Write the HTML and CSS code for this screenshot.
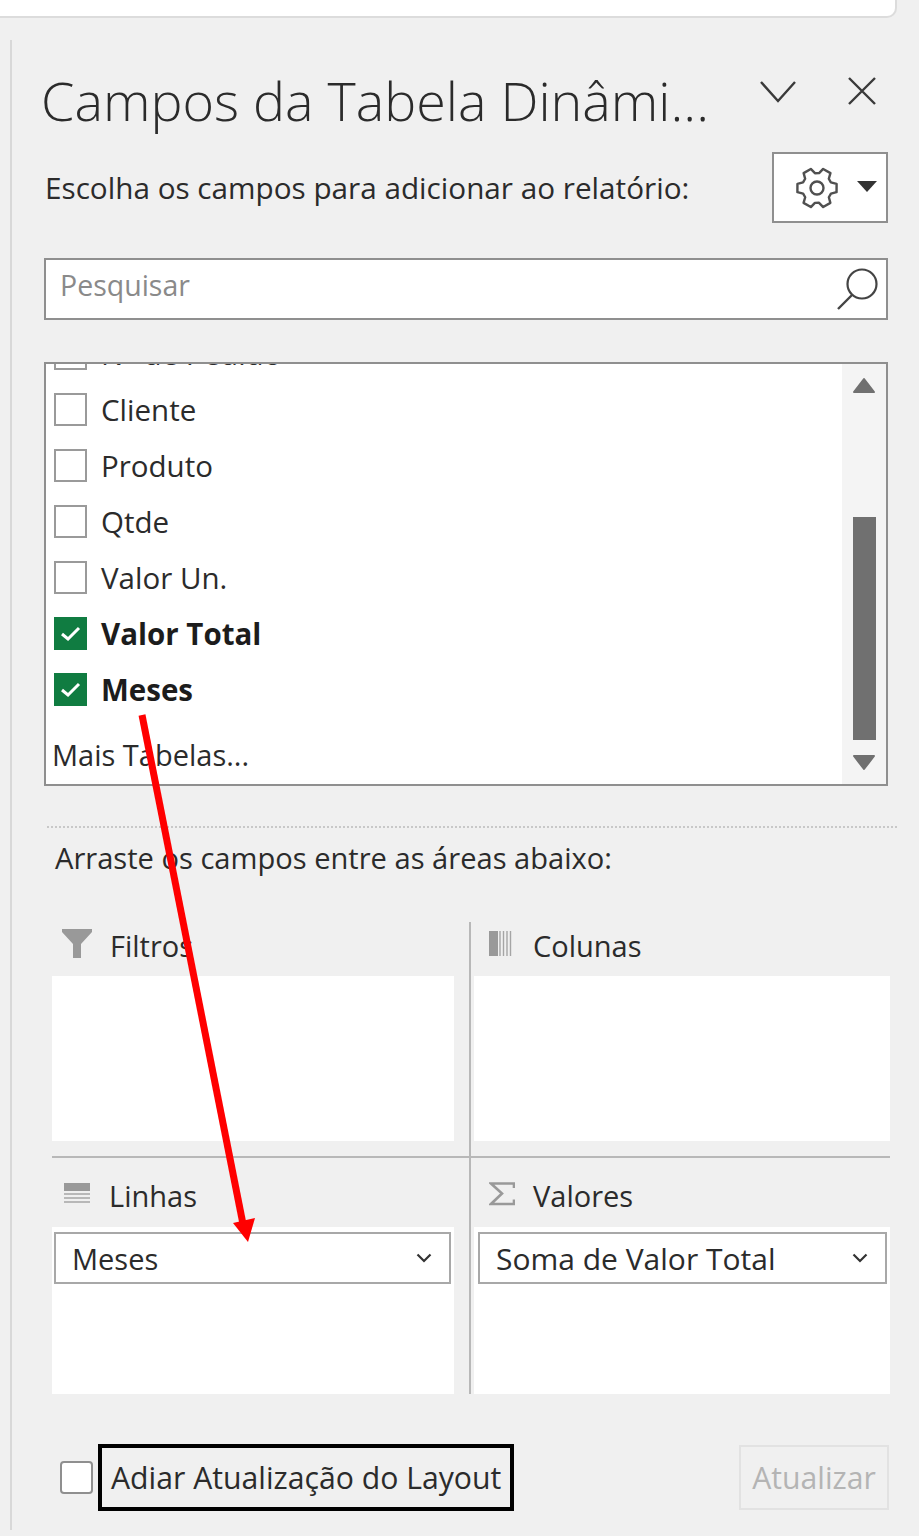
FILE: index.html

```html
<!DOCTYPE html>
<html lang="pt-BR">

<head>
  <meta charset="UTF-8" />
  <meta name="viewport" content="width=device-width, initial-scale=1" />
  <title>Campos da Tabela Dinâmica</title>
  <link rel="stylesheet" href="styles.css">
</head>

<body>
  <div class="top-strip"></div>

  <div class="pane">
    <div class="title-row">
      <h1 class="title">Campos da Tabela Dinâmi...</h1>
      <svg class="title-chevron" width="36" height="22" viewBox="0 0 36 22">
        <path d="M1 1 L18 20 L35 1" fill="none" stroke="#3a3a3a" stroke-width="2.4" />
      </svg>
      <svg class="title-close" width="28" height="28" viewBox="0 0 28 28">
        <path d="M1 1 L27 27 M27 1 L1 27" fill="none" stroke="#3a3a3a" stroke-width="2.4" />
      </svg>
    </div>

    <div class="choose-row">
      <span class="choose-label">Escolha os campos para adicionar ao relatório:</span>
      <button class="gear-btn">
        <svg width="44" height="44" viewBox="-2 -1 44 44">
          <path transform="rotate(30 20 21)" d="M15.8 1.4 L24.2 1.4 L25.6 7.1 L29.2 9.2 L34.9 7.6 L39 14.8 L34.9 18.9 L34.9 23.1 L39 27.2 L34.9 34.4 L29.2 32.8 L25.6 34.9 L24.2 40.6 L15.8 40.6 L14.4 34.9 L10.8 32.8 L5.1 34.4 L1 27.2 L5.1 23.1 L5.1 18.9 L1 14.8 L5.1 7.6 L10.8 9.2 L14.4 7.1 Z" fill="none" stroke="#505050" stroke-width="2.4" stroke-linejoin="round" />
          <circle cx="20" cy="21" r="6.5" fill="none" stroke="#505050" stroke-width="2.4" />
        </svg>
        <span class="gear-caret"></span>
      </button>
    </div>

    <div class="search">
      <span class="search-text">Pesquisar</span>
      <svg width="42" height="44" viewBox="0 0 42 44">
        <circle cx="25" cy="17" r="14.5" fill="none" stroke="#444" stroke-width="2.2" />
        <path d="M15 28 L1 42" fill="none" stroke="#444" stroke-width="2.4" />
      </svg>
    </div>

    <div class="field-list">
      <div class="field-items">
        <div class="field clipped"><span class="check"></span>N° de Pedido</div>
        <div class="field"><span class="check"></span>Cliente</div>
        <div class="field"><span class="check"></span>Produto</div>
        <div class="field"><span class="check"></span>Qtde</div>
        <div class="field"><span class="check"></span>Valor Un.</div>
        <div class="field selected">
          <span class="check on">
            <svg width="21" height="15" viewBox="0 0 21 15"><path d="M2 8 L8 13 L19 2" fill="none" stroke="#fff" stroke-width="3" /></svg>
          </span>Valor Total
        </div>
        <div class="field selected">
          <span class="check on">
            <svg width="21" height="15" viewBox="0 0 21 15"><path d="M2 8 L8 13 L19 2" fill="none" stroke="#fff" stroke-width="3" /></svg>
          </span>Meses
        </div>
        <div class="more-tables">Mais Tabelas...</div>
      </div>
      <div class="scrollbar">
        <svg class="scroll-up" width="24" height="18" viewBox="0 0 24 18"><path d="M12 2 L22 15 L2 15 Z" fill="#707070" stroke="#707070" stroke-width="2" stroke-linejoin="round" /></svg>
        <div class="scroll-thumb"></div>
        <svg class="scroll-down" width="24" height="18" viewBox="0 0 24 18"><path d="M2 3 L22 3 L12 16 Z" fill="#707070" stroke="#707070" stroke-width="2" stroke-linejoin="round" /></svg>
      </div>
    </div>

    <div class="dotted"></div>

    <div class="drag-label">Arraste os campos entre as áreas abaixo:</div>

    <div class="zones">
      <div class="zone zone-top zone-left">
        <div class="zone-head">
          <svg class="zone-icon" width="30" height="30" viewBox="0 0 30 30"><path d="M0 0 L30 0 L30 3 L19 15 L19 29 L11 29 L11 15 L0 3 Z" fill="#999" /></svg>
          <span>Filtros</span>
        </div>
        <div class="zone-box"></div>
      </div>
      <div class="zone zone-top zone-right">
        <div class="zone-head">
          <svg class="zone-icon" width="24" height="26" viewBox="0 0 24 26"><path d="M0 0 H9 V25 H0 Z" fill="#999" /><path d="M11 0 V25 M14.5 0 V25 M18 0 V25 M21.5 0 V25" stroke="#a5a5a5" stroke-width="1.4" /></svg>
          <span>Colunas</span>
        </div>
        <div class="zone-box"></div>
      </div>
      <div class="zone zone-left">
        <div class="zone-head tall">
          <svg class="zone-icon rows-icon" width="26" height="22" viewBox="0 0 26 22"><path d="M0 0 H26 V8 H0 Z" fill="#999" /><path d="M0 11 H26 M0 15 H26 M0 19 H26" stroke="#a5a5a5" stroke-width="1.6" /></svg>
          <span>Linhas</span>
        </div>
        <div class="zone-box">
          <div class="pill">
            <span>Meses</span>
            <svg width="16" height="10" viewBox="0 0 16 10"><path d="M1.5 1.5 L8 8 L14.5 1.5" fill="none" stroke="#333" stroke-width="2.2" /></svg>
          </div>
        </div>
      </div>
      <div class="zone zone-right">
        <div class="zone-head tall">
          <svg class="zone-icon sum-icon" width="26" height="24" viewBox="0 0 26 24"><path d="M25 6 V1.5 H2 L13 11.5 L2 22 H25 V17.5" fill="none" stroke="#999" stroke-width="2.6" /></svg>
          <span>Valores</span>
        </div>
        <div class="zone-box">
          <div class="pill">
            <span>Soma de Valor Total</span>
            <svg width="16" height="10" viewBox="0 0 16 10"><path d="M1.5 1.5 L8 8 L14.5 1.5" fill="none" stroke="#333" stroke-width="2.2" /></svg>
          </div>
        </div>
      </div>
    </div>

    <div class="footer">
      <span class="defer-check"></span>
      <span class="defer-label">Adiar Atualização do Layout</span>
      <button class="update-btn">Atualizar</button>
    </div>
  </div>

  <!-- seta vermelha desenhada por cima do painel -->
  <svg class="arrow" width="919" height="1536" viewBox="0 0 919 1536">
    <path d="M142 715 L243 1224" fill="none" stroke="#ff0000" stroke-width="7" />
    <polygon points="233,1223 255,1218 248,1242" fill="#ff0000" />
  </svg>
</body>

</html>
```

FILE: styles.css

```css
* {
  box-sizing: border-box;
}

body {
  margin: 0;
  width: 919px;
  height: 1536px;
  overflow: hidden;
  position: relative;
  background-color: #f0f0f0;
  font-family: "Open Sans", "Noto Sans", sans-serif;
  font-size: 29.5px;
  color: #2b2b2b;
}

.top-strip {
  width: 897px;
  height: 18px;
  background-color: #fff;
  border-bottom: 2px solid #dcdcdc;
  border-right: 2px solid #dcdcdc;
  border-bottom-right-radius: 10px;
}

.pane {
  margin: 22px 0 0 10px;
  height: 1490px;
  border-left: 2px solid #d8d8d8;
  padding: 30px 31px 0 32px;
}

.title-row {
  display: flex;
  align-items: center;
  height: 60px;
}

.title {
  margin: 0 0 0 -3px;
  font-size: 53.8px;
  font-weight: 300;
  line-height: 60px;
  white-space: nowrap;
  width: 717px;
  color: #2b2b2b;
}

.title-chevron {
  margin: -16px 0 0 2px;
}

.title-close {
  margin: -18px 0 0 52px;
}

.choose-row {
  display: flex;
  align-items: center;
  justify-content: space-between;
  margin-top: 22px;
  height: 71px;
}

.choose-label {
  margin-left: 1px;
  font-size: 29.7px;
  white-space: nowrap;
}

.gear-btn {
  display: flex;
  align-items: center;
  width: 116px;
  height: 71px;
  padding: 0 0 0 21px;
  background-color: #fff;
  border: 2px solid #8f8f8f;
}

.gear-caret {
  margin: -2px 0 0 18px;
  width: 0;
  height: 0;
  border-left: 10px solid transparent;
  border-right: 10px solid transparent;
  border-top: 11px solid #333;
}

.search {
  display: flex;
  align-items: center;
  justify-content: space-between;
  margin-top: 35px;
  height: 62px;
  padding: 0 7px 0 14px;
  background-color: #fff;
  border: 2px solid #8f8f8f;
}

.search-text {
  margin-top: -8px;
  font-size: 28.5px;
  color: #8a8a8a;
}

.field-list {
  display: flex;
  margin-top: 42px;
  height: 424px;
  background-color: #fff;
  border: 2px solid #8f8f8f;
  overflow: hidden;
}

.field-items {
  flex: 1;
  overflow: hidden;
}

.field {
  display: flex;
  align-items: center;
  height: 56px;
  padding: 0 0 2px 8px;
}

.field.clipped {
  margin-top: -38px;
}

.field.selected {
  font-weight: 700;
  color: #1c1c1c;
}

.check {
  display: flex;
  align-items: center;
  justify-content: center;
  width: 33px;
  height: 33px;
  margin-right: 14px;
  background-color: #fff;
  border: 2px solid #9a9a9a;
}

.check.on {
  background-color: #107c41;
  border-color: #107c41;
}

.more-tables {
  margin: 17px 0 0 6px;
  font-size: 29px;
  line-height: 40px;
}

.scrollbar {
  display: flex;
  flex-direction: column;
  align-items: center;
  width: 44px;
  background-color: #f4f4f4;
}

.scroll-up {
  margin-top: 13px;
  flex-shrink: 0;
}

.scroll-thumb {
  margin-top: 122px;
  width: 23px;
  height: 223px;
  background-color: #707070;
  flex-shrink: 0;
}

.scroll-down {
  margin-top: 13px;
  flex-shrink: 0;
}

.dotted {
  margin: 40px -9px 0 3px;
  border-top: 2px dotted #c8c8c8;
}

.drag-label {
  margin: 11px 0 0 11px;
  font-size: 29.1px;
  line-height: 38px;
  white-space: nowrap;
}

.zones {
  display: grid;
  grid-template-columns: 1fr 1fr;
  margin: 45px -2px 0 8px;
}

.zone-left {
  border-right: 2px solid #b8b8b8;
}

.zone-top {
  padding-bottom: 15px;
  border-bottom: 2px solid #b8b8b8;
}

.zone-head {
  display: flex;
  align-items: center;
  height: 54px;
  padding-bottom: 8px;
  font-size: 29px;
}

.zone-head.tall {
  height: 69px;
  padding-top: 6px;
  padding-bottom: 0;
}

.zone-left .zone-head {
  padding-left: 10px;
}

.zone-left .zone-head span {
  margin-left: 18px;
}

.zone-right .zone-head {
  padding-left: 18px;
}

.zone-right .zone-head span {
  margin-left: 20px;
}

.zone-icon {
  flex-shrink: 0;
  margin-top: -2px;
}

.zone-head.tall .zone-icon {
  margin-top: -4px;
}

.rows-icon {
  margin-left: 2px;
  margin-right: 1px;
}

.sum-icon {
  margin-right: -2px;
}

.zone-box {
  height: 165px;
  background-color: #fff;
}

.zone:not(.zone-top) .zone-box {
  height: 167px;
}

.zone-left .zone-box {
  margin-right: 15px;
  padding: 5px 3px 0 2px;
}

.zone-right .zone-box {
  margin-left: 3px;
  padding: 5px 3px 0 4px;
}

.pill {
  display: flex;
  align-items: center;
  justify-content: space-between;
  height: 52px;
  padding: 0 17px 0 16px;
  background-color: #fff;
  border: 2px solid #a8a8a8;
  font-size: 29px;
}

.zone-right .pill {
  font-size: 30px;
}

.footer {
  display: flex;
  align-items: center;
  margin-top: 50px;
  font-size: 30.2px;
}

.defer-check {
  width: 33px;
  height: 33px;
  margin-left: 16px;
  background-color: #fff;
  border: 2px solid #8f8f8f;
  border-radius: 4px;
}

.defer-label {
  display: flex;
  align-items: center;
  margin-left: 5px;
  width: 416px;
  height: 67px;
  padding: 0 0 0 9px;
  border: 4px solid #000;
  white-space: nowrap;
}

.update-btn {
  margin: 0 -1px 0 auto;
  width: 150px;
  height: 65px;
  padding: 0;
  background-color: #f0f0f0;
  border: 2px solid #e2e2e2;
  font: inherit;
  color: #b4b4b4;
}

.arrow {
  position: absolute;
  top: 0;
  left: 0;
  pointer-events: none;
}
```
